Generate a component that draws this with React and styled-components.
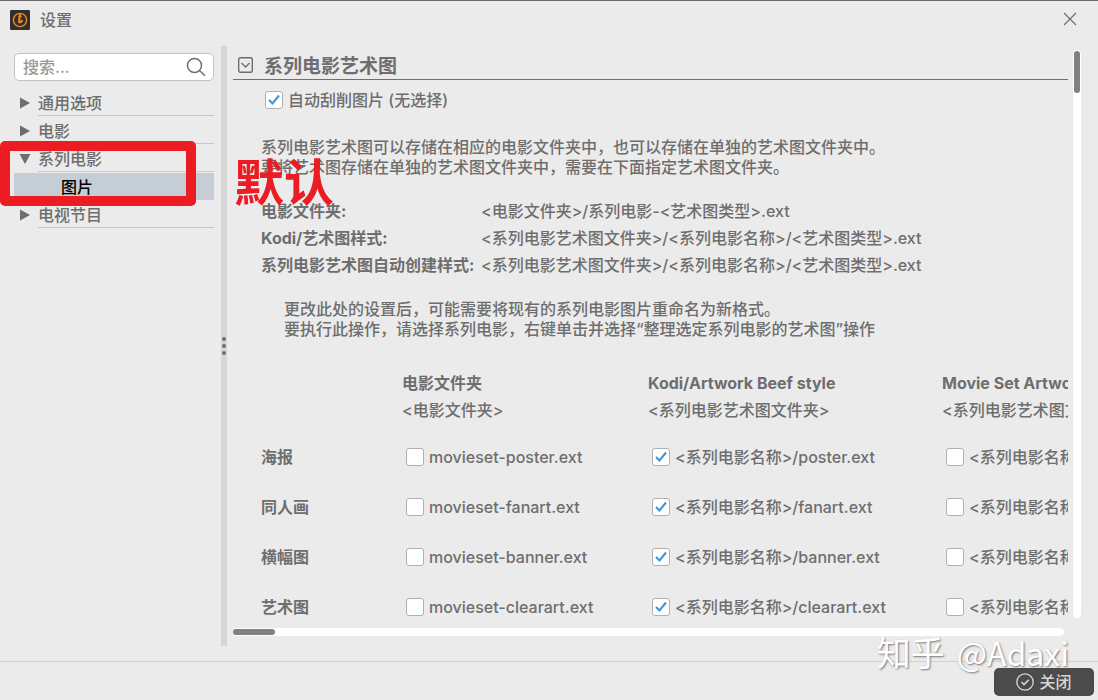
import styled, { createGlobalStyle } from "styled-components";

const artwork = [
    { name: '海报', file: 'poster' },
    { name: '同人画', file: 'fanart' },
    { name: '横幅图', file: 'banner' },
    { name: '艺术图', file: 'clearart' },
];

function Check({ id, label, checked }){
    return(
        <CheckLabel htmlFor={id}>
            <CheckBox type="checkbox" id={id} defaultChecked={checked} />
            <Tick viewBox="0 0 18 18"><path d="M4 9 L7.5 12.5 L14 4.5" /></Tick>
            {label}
        </CheckLabel>
    )
}

function TreeItem({ label, open }){
    return(
        <TreeRow type="button" aria-expanded={!!open}>
            <Arrow viewBox="0 0 12 12">
                <path d={open ? "M0.5 1 H11.5 L6 11 Z" : "M1 0.5 V11.5 L11 6 Z"} />
            </Arrow>
            <TreeText>{label}</TreeText>
        </TreeRow>
    )
}

function App(){
    return(
        <Window>
            <GlobalStyle />
            <TitleBar>
                <Logo viewBox="0 0 20 20">
                    <rect width="20" height="20" rx="1" fill="#332e2d" />
                    <circle cx="10" cy="10" r="6.6" fill="none" stroke="#e28a24" strokeWidth="1.4" />
                    <path d="M10.2 4 L9 11 Q8.8 12.6 10.2 12.3 Q11.8 11.8 12.2 10" fill="none" stroke="#ee8c1c" strokeWidth="2" />
                    <path d="M8.3 6.5 H11.8" stroke="#ee8c1c" strokeWidth="1.2" />
                </Logo>
                <Title>设置</Title>
                <CloseIcon type="button" aria-label="关闭窗口">
                    <svg width="14" height="14" viewBox="0 0 14 14"><path d="M1 1 L13 13 M13 1 L1 13" stroke="#6e6e6e" strokeWidth="1.2" /></svg>
                </CloseIcon>
            </TitleBar>

            <Body>
                <Sidebar>
                    <Search>
                        <SearchInput type="text" placeholder="搜索…" aria-label="搜索" />
                        <svg width="20" height="20" viewBox="0 0 20 20" fill="none" stroke="#6e6e6e" strokeWidth="1.5">
                            <circle cx="8.5" cy="8.5" r="7" />
                            <path d="M13.5 13.5 L19 18.8" />
                        </svg>
                    </Search>
                    <TreeItem label="通用选项" />
                    <TreeItem label="电影" />
                    <Group>
                        <TreeItem label="系列电影" open />
                        <TreeLeaf type="button">图片</TreeLeaf>
                        <Frame />
                    </Group>
                    <TreeItem label="电视节目" />
                </Sidebar>

                <Splitter><Dot /><Dot /><Dot /></Splitter>

                <Main>
                    <Scroll>
                        <Heading>
                            <svg width="15" height="16" viewBox="0 0 15 16" fill="none" stroke="#6e6e6e" strokeWidth="1.4">
                                <rect x="0.7" y="0.7" width="13.6" height="14.6" rx="1.5" />
                                <path d="M3.5 6 L7.5 10 L11.5 6" />
                            </svg>
                            <h2>系列电影艺术图</h2>
                        </Heading>
                        <Scrape>
                            <Check id="scrape" label="自动刮削图片 (无选择)" checked />
                        </Scrape>
                        <Content>
                            <Text>
                                系列电影艺术图可以存储在相应的电影文件夹中，也可以存储在单独的艺术图文件夹中。<br />
                                要将艺术图存储在单独的艺术图文件夹中，需要在下面指定艺术图文件夹。
                            </Text>
                            <Styles>
                                <dt>电影文件夹:</dt>
                                <dd>&lt;电影文件夹&gt;/系列电影-&lt;艺术图类型&gt;.ext</dd>
                                <dt>Kodi/艺术图样式:</dt>
                                <dd>&lt;系列电影艺术图文件夹&gt;/&lt;系列电影名称&gt;/&lt;艺术图类型&gt;.ext</dd>
                                <dt>系列电影艺术图自动创建样式:</dt>
                                <dd>&lt;系列电影艺术图文件夹&gt;/&lt;系列电影名称&gt;/&lt;艺术图类型&gt;.ext</dd>
                            </Styles>
                            <Text $indent>
                                更改此处的设置后，可能需要将现有的系列电影图片重命名为新格式。<br />
                                要执行此操作，请选择系列电影，右键单击并选择“整理选定系列电影的艺术图”操作
                            </Text>
                            <Table>
                                <colgroup>
                                    <Col $width={141} />
                                    <Col $width={246} />
                                    <Col $width={294} />
                                    <Col $width={300} />
                                </colgroup>
                                <thead>
                                    <tr>
                                        <td />
                                        <th scope="col">电影文件夹</th>
                                        <th scope="col">Kodi/Artwork Beef style</th>
                                        <th scope="col">Movie Set Artwork Automator style</th>
                                    </tr>
                                    <tr>
                                        <td />
                                        <td>&lt;电影文件夹&gt;</td>
                                        <td>&lt;系列电影艺术图文件夹&gt;</td>
                                        <td>&lt;系列电影艺术图文件夹&gt;</td>
                                    </tr>
                                </thead>
                                <tbody>
                                    {artwork.map(({ name, file }) => (
                                        <tr key={file}>
                                            <th scope="row">{name}</th>
                                            <td><Check id={`movie-${file}`} label={`movieset-${file}.ext`} /></td>
                                            <td><Check id={`kodi-${file}`} label={`<系列电影名称>/${file}.ext`} checked /></td>
                                            <td><Check id={`auto-${file}`} label={`<系列电影名称>-${file}.ext`} /></td>
                                        </tr>
                                    ))}
                                </tbody>
                            </Table>
                        </Content>
                    </Scroll>
                    <VerticalTrack><VerticalThumb /></VerticalTrack>
                    <HorizontalTrack><HorizontalThumb /></HorizontalTrack>
                    <Note>默认</Note>
                </Main>
            </Body>

            <Footer>
                <CloseButton type="button">
                    <svg width="18" height="18" viewBox="0 0 18 18" fill="none" stroke="#d6d6d6" strokeWidth="1.3">
                        <circle cx="9" cy="9" r="8.2" />
                        <path d="M5.5 9 L8 11.5 L12.8 6.8" strokeWidth="1.6" />
                    </svg>
                    关闭
                </CloseButton>
                <Watermark>知乎<Author>@Adaxi</Author></Watermark>
            </Footer>
        </Window>
    )
}

export default App;

const GlobalStyle = createGlobalStyle`
    * {
        box-sizing: border-box;
    }
    body {
        margin: 0;
        background-color: #ebebeb;
        color: #6e6e6e;
        font-family: Inter, "Noto Sans CJK SC", sans-serif;
        font-size: 16px;
        font-weight: 500;
        line-height: 20px;
    }
    button, input {
        font: inherit;
        color: inherit;
    }
`

const Window = styled.div`
    height: 100vh;
    display: flex;
    flex-direction: column;
    border-top: 1px solid #6e6a6c;
    overflow: hidden;
`

const TitleBar = styled.header`
    height: 45px;
    flex: none;
    display: flex;
    align-items: flex-start;
    gap: 10px;
    padding: 9px 20px 0 10px;
`

const Logo = styled.svg`
    width: 20px;
    height: 20px;
`

const Title = styled.h1`
    flex: 1;
    margin: 0;
    font-size: 16px;
    font-weight: 500;
`

const CloseIcon = styled.button`
    display: flex;
    padding: 2px 1px;
    border: none;
    background: none;
`

const Body = styled.div`
    flex: 1;
    min-height: 0;
    display: flex;
    padding-bottom: 15px;
`

const Sidebar = styled.nav`
    width: 221px;
    flex: none;
    padding: 7px 7px 0 14px;
`

const Search = styled.div`
    height: 28px;
    display: flex;
    align-items: center;
    padding: 0 7px 0 8px;
    margin-bottom: 7px;
    background-color: white;
    border: 1px solid #c2c2c2;
    border-radius: 5px;
`

const SearchInput = styled.input`
    flex: 1;
    min-width: 0;
    padding: 0;
    border: none;
    outline: none;
    background: none;
    &::placeholder {
        color: #999999;
    }
`

const TreeRow = styled.button`
    width: 100%;
    height: 28px;
    display: flex;
    align-items: center;
    gap: 7px;
    padding: 0 0 0 5px;
    border: none;
    background: none;
    text-align: left;
`

const Arrow = styled.svg`
    width: 12px;
    height: 12px;
    margin-top: 2px;
    fill: #6e6e6e;
`

const TreeText = styled.span`
    flex: 1;
    padding: 5px 0 2px;
    border-bottom: 1px solid #c8c8c8;
`

const Group = styled.div`
    position: relative;
`

const TreeLeaf = styled.button`
    width: 100%;
    height: 28px;
    padding: 1px 0 0 47px;
    border: none;
    border-top: 1px solid #ebebeb;
    background-color: #c5ced6;
    color: black;
    text-align: left;
`

const Frame = styled.div`
    position: absolute;
    top: -3px;
    right: 18px;
    bottom: -6px;
    left: -14px;
    border: 10px solid #ec1c24;
    border-radius: 5px;
`

const Splitter = styled.div`
    width: 6px;
    flex: none;
    display: flex;
    flex-direction: column;
    align-items: center;
    justify-content: center;
    gap: 3px;
    background-color: #d6d6d6;
`

const Dot = styled.i`
    width: 4px;
    height: 4px;
    border-radius: 2px;
    background-color: #6e6e6e;
`

const Main = styled.main`
    position: relative;
    flex: 1;
    min-width: 0;
    display: grid;
    grid-template-columns: 1fr 8px;
    grid-template-rows: 1fr 8px;
    gap: 10px 5px;
    padding: 4px 17px 10px 6px;
`

const Scroll = styled.div`
    min-width: 0;
    min-height: 0;
    overflow: auto;
    scrollbar-width: none;
`

const Heading = styled.div`
    height: 30px;
    display: flex;
    align-items: center;
    gap: 11px;
    padding-left: 5px;
    border-bottom: 1px solid #6e6e6e;
    h2 {
        margin: 0;
        padding-top: 4px;
        font-size: 19px;
        font-weight: 700;
    }
`

const Scrape = styled.div`
    padding: 10px 0 0 32px;
`

const Content = styled.div`
    padding: 27px 0 0 28px;
`

const Text = styled.p`
    margin: 0;
    padding-left: ${({ $indent }) => ($indent ? '23px' : '0')};
    white-space: nowrap;
`

const Styles = styled.dl`
    display: grid;
    grid-template-columns: 213px auto;
    grid-auto-rows: 20px;
    gap: 7px;
    margin: 24px 0;
    white-space: nowrap;
    dt {
        font-weight: 700;
    }
    dd {
        margin: 0;
    }
`

const Table = styled.table`
    width: 981px;
    table-layout: fixed;
    border-collapse: collapse;
    margin-top: 30px;
    white-space: nowrap;
    th, td {
        height: 27px;
        padding: 0;
        text-align: left;
    }
    tbody th, tbody td {
        height: 50px;
        padding-top: 18px;
    }
    tbody td {
        padding-left: 4px;
    }
`

const Col = styled.col`
    width: ${({ $width }) => $width}px;
`

const CheckLabel = styled.label`
    position: relative;
    display: flex;
    align-items: center;
    gap: 5px;
`

const Tick = styled.svg`
    position: absolute;
    left: 0;
    width: 18px;
    height: 18px;
    fill: none;
    stroke: #3d94d6;
    stroke-width: 2;
    pointer-events: none;
    visibility: hidden;
`

const CheckBox = styled.input`
    appearance: none;
    width: 18px;
    height: 18px;
    margin: 0;
    background-color: white;
    border: 1px solid #b0b0b0;
    border-radius: 3px;
    &:checked + ${Tick} {
        visibility: visible;
    }
`

const VerticalTrack = styled.div`
    padding: 1px;
    border-radius: 4px;
    background-color: white;
`

const VerticalThumb = styled.div`
    height: 42px;
    border-radius: 3px;
    background-color: #808080;
`

const HorizontalTrack = styled.div`
    margin-right: 4px;
    padding: 1px 0;
    border-radius: 4px;
    background-color: white;
`

const HorizontalThumb = styled.div`
    width: 42px;
    height: 6px;
    border-radius: 3px;
    background-color: #808080;
`

const Note = styled.strong`
    position: absolute;
    top: 108px;
    left: 7px;
    color: #ec1c24;
    font-family: "Noto Sans CJK SC", sans-serif;
    font-size: 50px;
    line-height: 50px;
`

const Footer = styled.footer`
    position: relative;
    flex: none;
    display: flex;
    justify-content: flex-end;
    padding: 6px 4px 4px;
    border-top: 1px solid #d2d2d2;
`

const CloseButton = styled.button`
    width: 100px;
    height: 28px;
    display: flex;
    align-items: center;
    justify-content: center;
    gap: 5px;
    padding: 0;
    border: none;
    border-radius: 5px;
    background-color: #4b4b4b;
    color: #d6d6d6;
`

const Watermark = styled.span`
    position: absolute;
    right: 29px;
    bottom: 28px;
    display: flex;
    align-items: baseline;
    gap: 12px;
    color: white;
    font-family: "Noto Sans CJK SC", sans-serif;
    font-size: 34px;
    font-weight: 400;
    line-height: 40px;
    text-shadow: 1px 1px 2px #777777;
    pointer-events: none;
`

const Author = styled.span`
    font-size: 32px;
`
